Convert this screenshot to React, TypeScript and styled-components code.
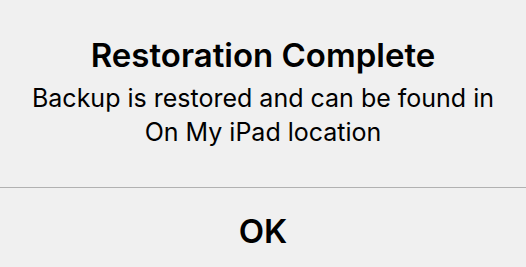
import React from 'react';
import styled, { createGlobalStyle } from 'styled-components';

const GlobalStyle = createGlobalStyle`
    html, body {
        margin: 0;
        padding: 0;
        background: #f0f0f0;
    }
    #root {
        width: 526px;
        height: 267px;
    }
`;

const AlertWrapper = styled.div`
    width: 100%;
    height: 100%;
    display: flex;
    flex-direction: column;
    background-color: #f0f0f0;
    font-family: Inter, "Liberation Sans", sans-serif;
    color: #000;
`;

const Content = styled.div`
    height: 187px;
    box-sizing: border-box;
    padding: 35px 10px 0 10px;
    display: flex;
    flex-direction: column;
    align-items: center;
    text-align: center;
`;

const Title = styled.div`
    font-size: 33px;
    font-weight: 600;
    line-height: 40px;
    margin-bottom: 6px;
    white-space: nowrap;
`;

const Message = styled.div`
    font-size: 25px;
    font-weight: 400;
    line-height: 34px;
    white-space: nowrap;
`;

const Separator = styled.div`
    height: 1px;
    background-color: #b1b1b1;
`;

const ActionButton = styled.button`
    flex: 1;
    border: none;
    background: transparent;
    font-family: inherit;
    font-size: 33px;
    font-weight: 600;
    color: #000;
    padding: 6px 0 0 0;
`;

const App = () => {
    return <>
        <GlobalStyle />
        <AlertWrapper>
            <Content>
                <Title>Restoration Complete</Title>
                <Message>Backup is restored and can be found in<br />On My iPad location</Message>
            </Content>
            <Separator />
            <ActionButton>OK</ActionButton>
        </AlertWrapper>
    </>;
}

export default App;
